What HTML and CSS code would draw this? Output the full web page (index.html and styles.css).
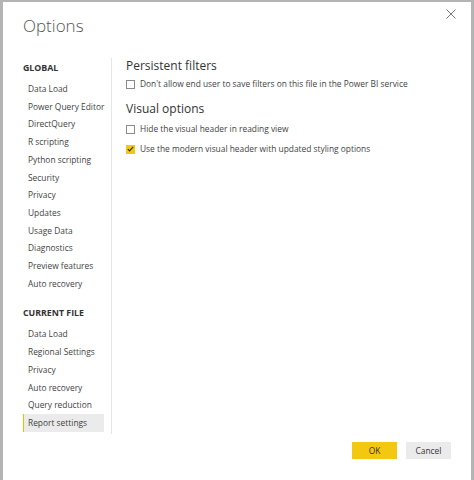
FILE: index.html
```html
<!DOCTYPE html>
<html lang="en">
  <head>
    <meta charset="UTF-8" />
    <meta name="viewport" content="width=device-width, initial-scale=1.0" />
    <title>Options</title>
    <link rel="stylesheet" href="styles.css">
  </head>
  <body>
    <div class="dialog">
      <div class="header">
        <h1>Options</h1>
        <button class="close" aria-label="Close">
          <svg width="10" height="10" viewBox="0 0 10 10">
            <path d="M0.5 0.5 L9.5 9.5 M9.5 0.5 L0.5 9.5" stroke="#777" stroke-width="1" fill="none" />
          </svg>
        </button>
      </div>
      <div class="main">
        <nav class="sidebar">
          <div class="group-title">GLOBAL</div>
          <ul>
            <li>Data Load</li>
            <li>Power Query Editor</li>
            <li>DirectQuery</li>
            <li>R scripting</li>
            <li>Python scripting</li>
            <li>Security</li>
            <li>Privacy</li>
            <li>Updates</li>
            <li>Usage Data</li>
            <li>Diagnostics</li>
            <li>Preview features</li>
            <li>Auto recovery</li>
          </ul>
          <div class="group-title second">CURRENT FILE</div>
          <ul>
            <li>Data Load</li>
            <li>Regional Settings</li>
            <li>Privacy</li>
            <li>Auto recovery</li>
            <li>Query reduction</li>
            <li class="active">Report settings</li>
          </ul>
        </nav>
        <div class="content">
          <h2>Persistent filters</h2>
          <label class="option">
            <span class="box"></span>
            Don't allow end user to save filters on this file in the Power BI service
          </label>
          <h2 class="section">Visual options</h2>
          <label class="option">
            <span class="box"></span>
            Hide the visual header in reading view
          </label>
          <label class="option spaced">
            <span class="box checked">
              <svg width="8" height="8" viewBox="0 0 8 8">
                <path d="M1 4.2 L3 6.2 L7 1.6" stroke="#333" stroke-width="1.4" fill="none" />
              </svg>
            </span>
            Use the modern visual header with updated styling options
          </label>
        </div>
      </div>
      <div class="footer">
        <button class="btn primary">OK</button>
        <button class="btn">Cancel</button>
      </div>
    </div>
  </body>
</html>
```

FILE: styles.css
```css
body {
  margin: 0;
  font-family: "Open Sans", "Noto Sans", sans-serif;
  color: #3f3f3f;
  background: white;
}
.dialog {
  box-sizing: border-box;
  width: 474px;
  height: 480px;
  border-top: 2px solid #b4b4b4;
  border-left: 3px solid #b4b4b4;
  border-right: 3px solid #b4b4b4;
  display: flex;
  flex-direction: column;
}
.header {
  display: flex;
  justify-content: space-between;
  align-items: flex-start;
  padding: 0 14px 0 20px;
}
h1 {
  margin: 12px 0 0;
  font-size: 17px;
  font-weight: 300;
  color: #555;
  line-height: 24px;
}
.close {
  border: none;
  background: none;
  padding: 0;
  margin-top: 5px;
  width: 12px;
  height: 12px;
}
.main {
  display: flex;
  height: 380px;
  margin-top: 20px;
}
.sidebar {
  width: 88px;
  padding-left: 20px;
  border-right: 1px solid #e6e6e6;
  height: 376px;
}
.group-title {
  font-size: 8.8px;
  font-weight: 700;
  color: #333;
  line-height: 14px;
  margin-top: 3px;
  margin-bottom: 5px;
}
.group-title.second {
  margin-top: 14px;
}
ul {
  list-style: none;
  margin: 0;
  padding: 0;
}
li {
  font-size: 8.4px;
  line-height: 17.7px;
  padding-left: 5px;
  white-space: nowrap;
}
li.active {
  background: #ebebeb;
  border-left: 1px solid #e8c400;
  padding-left: 4px;
  margin-right: 7px;
}
.content {
  padding-left: 14px;
}
h2 {
  margin: 0;
  font-size: 12px;
  font-weight: 400;
  line-height: 16px;
  color: #333;
}
h2.section {
  margin-top: 9px;
}
.option {
  display: flex;
  align-items: center;
  font-size: 8.4px;
  line-height: 16px;
  margin-top: 2px;
}
.option.spaced {
  margin-top: 4px;
}
h2.section + .option {
  margin-top: 4px;
}
.box {
  box-sizing: border-box;
  width: 9px;
  height: 9px;
  border: 1px solid #8a8a8a;
  margin-right: 5px;
  display: flex;
  align-items: center;
  justify-content: center;
}
.box.checked {
  background: #f2c811;
  border-color: #f2c811;
}
.footer {
  display: flex;
  justify-content: flex-end;
  gap: 9px;
  padding: 4px 20px 0 0;
}
.btn {
  width: 45px;
  height: 17px;
  border: none;
  background: #ebebeb;
  font-family: "Open Sans", "Noto Sans", sans-serif;
  font-size: 8.4px;
  color: #333;
  padding: 0;
}
.btn.primary {
  background: #f2c811;
}
```
